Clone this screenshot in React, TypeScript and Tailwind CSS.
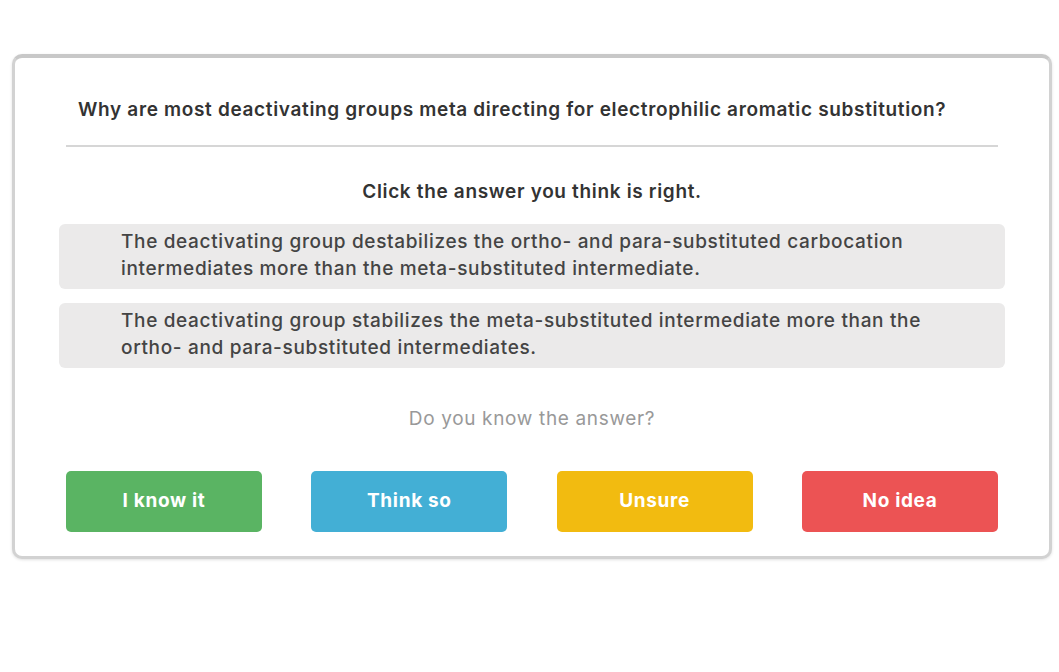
const answers = [
  "The deactivating group destabilizes the ortho- and para-substituted carbocation intermediates more than the meta-substituted intermediate.",
  "The deactivating group stabilizes the meta-substituted intermediate more than the ortho- and para-substituted intermediates.",
];

const choices = [
  { label: "I know it", color: "bg-[#5ab463]" },
  { label: "Think so", color: "bg-[#43afd5]" },
  { label: "Unsure", color: "bg-[#f2bb10]" },
  { label: "No idea", color: "bg-[#ec5354]" },
];

export default function App() {
  return (
    <div className="w-[1059px] h-[672px] bg-white font-['Inter','Liberation_Sans',sans-serif] tracking-[0.66px]">
      <div className="pt-[54px] pl-[12px]">
        <div className="w-[1040px] h-[505px] rounded-[10px] border-[3px] border-[#d2d2d2] border-t-[4px] border-t-[#c8c8c8] bg-white shadow-[0_1px_3px_rgba(0,0,0,0.12)]">
          <div className="pt-[37px] px-[51px]">
            <h1 className="text-[19px] font-semibold text-[#333] leading-[30px] pl-[12px]">
              Why are most deactivating groups meta directing for electrophilic aromatic substitution?
            </h1>
            <div className="mt-[20px] h-[2px] bg-[#d6d6d6]" />
            <p className="mt-[30px] text-center text-[19px] font-semibold text-[#333] leading-[30px]">
              Click the answer you think is right.
            </p>
          </div>
          <div className="mt-[17px] px-[44px] flex flex-col gap-[14px]">
            {answers.map((a, i) => (
              <div
                key={i}
                className="h-[65px] rounded-[6px] bg-[#ebeaea] pl-[62px] pr-[56px] pb-[4px] flex items-center text-[19px] font-medium text-[#444] leading-[27px]"
              >
                {a}
              </div>
            ))}
          </div>
          <p className="mt-[36px] text-center text-[19px] text-[#999] leading-[30px]">
            Do you know the answer?
          </p>
          <div className="mt-[37px] px-[51px] flex justify-between">
            {choices.map((c) => (
              <button
                key={c.label}
                className={`${c.color} w-[196px] h-[61px] rounded-[5px] text-white text-[19px] font-bold`}
              >
                {c.label}
              </button>
            ))}
          </div>
        </div>
      </div>
    </div>
  );
}
